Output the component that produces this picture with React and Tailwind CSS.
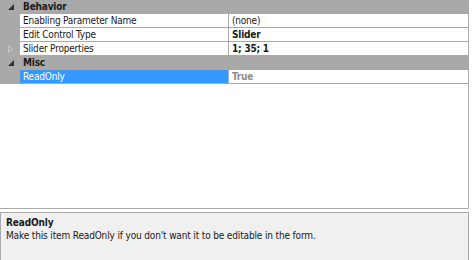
import React from "react";

function Collapse() {
  return (
    <svg width="6" height="6" viewBox="0 0 6 6" className="block">
      <polygon points="6,0 6,6 0,6" fill="#333333" />
    </svg>
  );
}
function Expand() {
  return (
    <svg width="5" height="8" viewBox="0 0 5 8" className="block">
      <polygon points="0.5,0.5 4.5,4 0.5,7.5" fill="none" stroke="#c8c8c8" strokeWidth="1" />
    </svg>
  );
}

function Header({ label }) {
  return (
    <div className="flex h-[14px] bg-[#a9a9a9] border-b border-[#a9a9a9]">
      <div className="w-[20px] flex items-center justify-center pl-[1px]">
        <Collapse />
      </div>
      <div className="pl-[3px] font-bold text-[#1a1a1a] leading-[13px]">{label}</div>
    </div>
  );
}

function Row({ name, value, bold, expand, selected }) {
  return (
    <div className="flex h-[14px]">
      <div className="w-[20px] bg-[#a9a9a9] flex items-center justify-center">
        {expand ? <Expand /> : null}
      </div>
      <div
        className={
          "w-[209px] pl-[3px] leading-[13px] border-b border-r border-[#a9a9a9] " +
          (selected ? "bg-[#3399ff] text-white" : "bg-white text-[#1a1a1a]")
        }
      >
        {name}
      </div>
      <div
        className={
          "flex-1 pl-[3px] leading-[13px] border-b border-[#a9a9a9] bg-white " +
          (bold ? "font-bold " : "") +
          (selected ? "text-[#8c8c8c]" : "text-[#1a1a1a]")
        }
      >
        {value}
      </div>
    </div>
  );
}

export default function App() {
  return (
    <div
      className="w-[474px] h-[260px] bg-white flex flex-col text-[10px] tracking-[-0.2px] overflow-hidden"
      style={{ fontFamily: '"DejaVu Sans Condensed", "Liberation Sans", sans-serif' }}
    >
      <div className="w-[469px] h-[209px] border-r border-b border-[#a9a9a9] flex flex-col">
        <Header label="Behavior" />
        <Row name="Enabling Parameter Name" value="(none)" />
        <Row name="Edit Control Type" value="Slider" bold />
        <Row name="Slider Properties" value="1; 35; 1" bold expand />
        <Header label="Misc" />
        <Row name="ReadOnly" value="True" bold selected />
      </div>
      <div className="h-[3px]" />
      <div className="w-[469px] flex-1 bg-[#f0f0f0] border-t border-l border-r border-[#a9a9a9] px-[5px] pt-[3px] text-[#1a1a1a] tracking-[-0.15px]">
        <div className="font-bold leading-[13px] text-[10px]">ReadOnly</div>
        <div className="leading-[13px] text-[10px]">Make this item ReadOnly if you don't want it to be editable in the form.</div>
      </div>
    </div>
  );
}
